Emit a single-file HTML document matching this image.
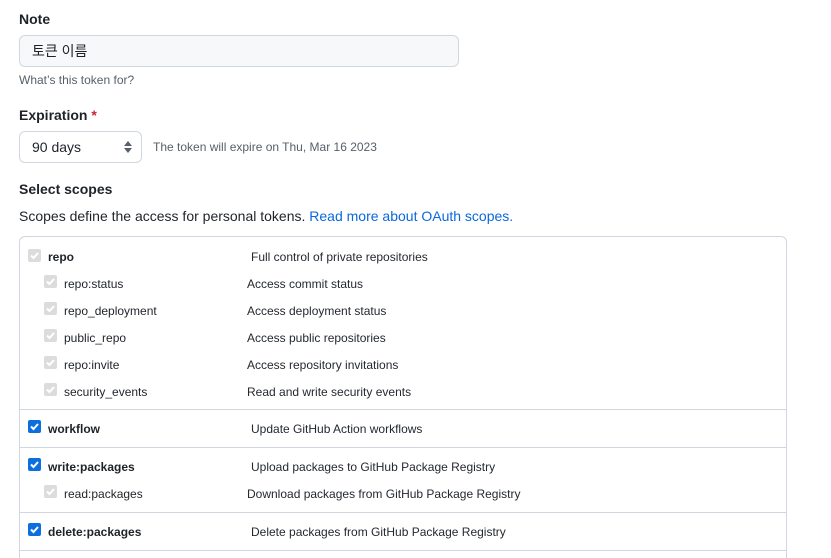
<!DOCTYPE html>
<html style="width:831px;height:558px;overflow:hidden"><head><meta charset="utf-8"><style>
body{margin:0;width:831px;height:558px;overflow:hidden;background:#fff;font-family:"Liberation Sans","Noto Sans CJK KR",sans-serif;color:#1f2328;position:relative}
.a{position:absolute;white-space:nowrap}
.h{font-weight:bold;font-size:14px}
.cb{position:absolute;width:13px;height:13px;border-radius:2px}
.on{background:#0b6fe0}
.dis{background:#dcdcdc}
.cb svg{position:absolute;left:1px;top:1px}
.lbl{font-size:12px}
.b{font-weight:bold}
.d{font-size:12px;color:#24292f}
.div{position:absolute;left:20px;width:766px;height:1px;background:#d0d7de}
</style></head><body>
<div class="a h" style="left:19px;top:11px">Note</div>
<div class="a" style="left:19px;top:35px;width:438px;height:30px;background:#f6f8fa;border:1px solid #d0d7de;border-radius:6px"></div>
<div class="a" style="left:32px;top:41px;font-size:14px">토큰 이름</div>
<div class="a" style="left:19px;top:73px;font-size:12px;color:#57606a">What’s this token for?</div>
<div class="a h" style="left:19px;top:107px">Expiration <span style="color:#cf222e">*</span></div>
<div class="a" style="left:19px;top:131px;width:121px;height:30px;border:1px solid #d0d7de;border-radius:6px"></div>
<div class="a" style="left:32px;top:139px;font-size:14px">90 days</div>
<svg class="a" style="left:124px;top:141px" width="8" height="12"><path d="M4 0L8 5H0Z M4 12L0 7H8Z" fill="#57606a"/></svg>
<div class="a" style="left:153px;top:140px;font-size:12px;color:#57606a">The token will expire on Thu, Mar 16 2023</div>
<div class="a h" style="left:19px;top:181px">Select scopes</div>
<div class="a" style="left:19px;top:208px;font-size:14px">Scopes define the access for personal tokens. <span style="color:#0969da">Read more about OAuth scopes.</span></div>
<div class="a" style="left:19px;top:236px;width:766px;height:330px;border:1px solid #d0d7de;border-bottom:none;border-radius:6px 6px 0 0"></div>
<div class="div" style="top:409px"></div>
<div class="div" style="top:447px"></div>
<div class="div" style="top:512px"></div>
<div class="div" style="top:550px"></div>

<div class="cb dis" style="left:28px;top:249px"><svg width="11" height="11"><path d="M2 5.5L4.5 8L9 3" stroke="#fff" stroke-width="2" fill="none"/></svg></div>
<div class="a lbl b" style="left:48px;top:250px">repo</div>
<div class="a d" style="left:251px;top:250px">Full control of private repositories</div>

<div class="cb dis" style="left:44px;top:275px"><svg width="11" height="11"><path d="M2 5.5L4.5 8L9 3" stroke="#fff" stroke-width="2" fill="none"/></svg></div>
<div class="a lbl" style="left:64px;top:277px">repo:status</div>
<div class="a d" style="left:247px;top:277px">Access commit status</div>

<div class="cb dis" style="left:44px;top:302px"><svg width="11" height="11"><path d="M2 5.5L4.5 8L9 3" stroke="#fff" stroke-width="2" fill="none"/></svg></div>
<div class="a lbl" style="left:64px;top:304px">repo_deployment</div>
<div class="a d" style="left:247px;top:304px">Access deployment status</div>

<div class="cb dis" style="left:44px;top:329px"><svg width="11" height="11"><path d="M2 5.5L4.5 8L9 3" stroke="#fff" stroke-width="2" fill="none"/></svg></div>
<div class="a lbl" style="left:64px;top:331px">public_repo</div>
<div class="a d" style="left:247px;top:331px">Access public repositories</div>

<div class="cb dis" style="left:44px;top:356px"><svg width="11" height="11"><path d="M2 5.5L4.5 8L9 3" stroke="#fff" stroke-width="2" fill="none"/></svg></div>
<div class="a lbl" style="left:64px;top:358px">repo:invite</div>
<div class="a d" style="left:247px;top:358px">Access repository invitations</div>

<div class="cb dis" style="left:44px;top:383px"><svg width="11" height="11"><path d="M2 5.5L4.5 8L9 3" stroke="#fff" stroke-width="2" fill="none"/></svg></div>
<div class="a lbl" style="left:64px;top:385px">security_events</div>
<div class="a d" style="left:247px;top:385px">Read and write security events</div>

<div class="cb on" style="left:28px;top:420px"><svg width="11" height="11"><path d="M2 5.5L4.5 8L9 3" stroke="#fff" stroke-width="2" fill="none"/></svg></div>
<div class="a lbl b" style="left:48px;top:422px">workflow</div>
<div class="a d" style="left:251px;top:422px">Update GitHub Action workflows</div>

<div class="cb on" style="left:28px;top:458px"><svg width="11" height="11"><path d="M2 5.5L4.5 8L9 3" stroke="#fff" stroke-width="2" fill="none"/></svg></div>
<div class="a lbl b" style="left:48px;top:460px">write:packages</div>
<div class="a d" style="left:251px;top:460px">Upload packages to GitHub Package Registry</div>

<div class="cb dis" style="left:44px;top:485px"><svg width="11" height="11"><path d="M2 5.5L4.5 8L9 3" stroke="#fff" stroke-width="2" fill="none"/></svg></div>
<div class="a lbl" style="left:64px;top:487px">read:packages</div>
<div class="a d" style="left:247px;top:487px">Download packages from GitHub Package Registry</div>

<div class="cb on" style="left:28px;top:523px"><svg width="11" height="11"><path d="M2 5.5L4.5 8L9 3" stroke="#fff" stroke-width="2" fill="none"/></svg></div>
<div class="a lbl b" style="left:48px;top:525px">delete:packages</div>
<div class="a d" style="left:251px;top:525px">Delete packages from GitHub Package Registry</div>
</body></html>
